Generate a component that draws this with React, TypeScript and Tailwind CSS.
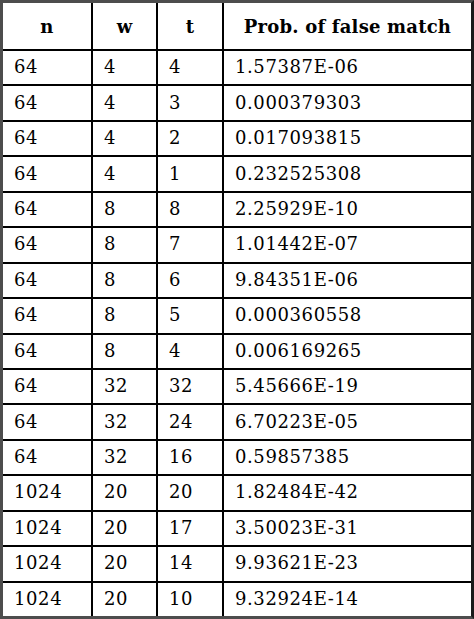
import React from "react";

const rows: [string, string, string, string][] = [
  ["64", "4", "4", "1.57387E-06"],
  ["64", "4", "3", "0.000379303"],
  ["64", "4", "2", "0.017093815"],
  ["64", "4", "1", "0.232525308"],
  ["64", "8", "8", "2.25929E-10"],
  ["64", "8", "7", "1.01442E-07"],
  ["64", "8", "6", "9.84351E-06"],
  ["64", "8", "5", "0.000360558"],
  ["64", "8", "4", "0.006169265"],
  ["64", "32", "32", "5.45666E-19"],
  ["64", "32", "24", "6.70223E-05"],
  ["64", "32", "16", "0.59857385"],
  ["1024", "20", "20", "1.82484E-42"],
  ["1024", "20", "17", "3.50023E-31"],
  ["1024", "20", "14", "9.93621E-23"],
  ["1024", "20", "10", "9.32924E-14"],
];

const cols = "grid grid-cols-[90px_65px_66px_1fr]";

export default function App() {
  return (
    <div
      className="w-[474px] h-[619px] bg-white border-[3px] border-[#4d4d4d] border-r-[#1a1a1a] flex flex-col text-black text-[18px]"
      style={{ fontFamily: '"DejaVu Serif", "Liberation Serif", serif' }}
    >
      <div className={`${cols} h-[48px] shrink-0 border-b-2 border-black font-bold tracking-[0.2px]`}>
        <div className="border-r-2 border-black flex items-center justify-center">n</div>
        <div className="border-r-2 border-black flex items-center justify-center">w</div>
        <div className="border-r-2 border-black flex items-center justify-center">t</div>
        <div className="flex items-center justify-center">Prob. of false match</div>
      </div>
      <div className="flex-1 flex flex-col tracking-[0.6px]">
        {rows.map((r, i) => (
          <div
            key={i}
            className={`${cols} flex-1 ${i < rows.length - 1 ? "border-b-2 border-black" : ""}`}
          >
            <div className="border-r-2 border-black flex items-center pl-[11px] pb-[2px]">{r[0]}</div>
            <div className="border-r-2 border-black flex items-center pl-[11px] pb-[2px]">{r[1]}</div>
            <div className="border-r-2 border-black flex items-center pl-[11px] pb-[2px]">{r[2]}</div>
            <div className="flex items-center pl-[11px] pb-[2px]">{r[3]}</div>
          </div>
        ))}
      </div>
    </div>
  );
}
